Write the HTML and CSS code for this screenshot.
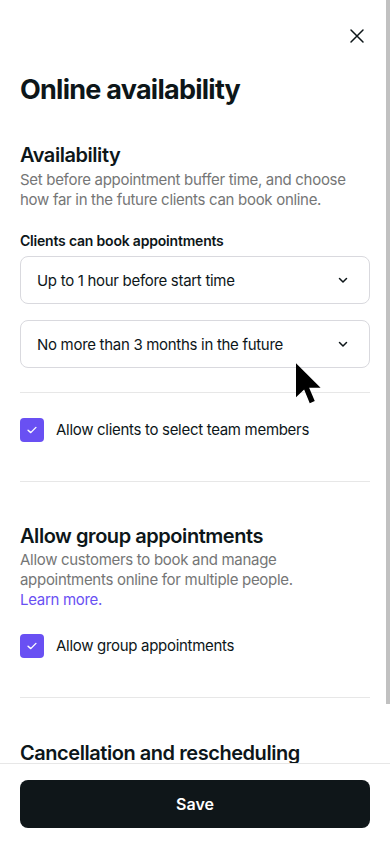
FILE: index.html
```html
<!DOCTYPE html>
<html lang="en">
<head>
<meta charset="utf-8">
<meta name="viewport" content="width=device-width, initial-scale=1">
<title>Online availability</title>
<link rel="stylesheet" href="styles.css">
</head>
<body>
<div class="page">
  <main class="content">
    <div class="topbar">
      <button class="close" aria-label="Close">
        <svg viewBox="0 0 16 16" width="16" height="16"><path d="M2 2 L14 14 M14 2 L2 14" stroke="#0d1619" stroke-width="1.5" stroke-linecap="round" fill="none"/></svg>
      </button>
    </div>
    <h1 class="title">Online availability</h1>

    <section class="section">
      <h2 class="section-title">Availability</h2>
      <p class="desc">Set before appointment buffer time, and choose how far in the future clients can book online.</p>
      <div class="field-label">Clients can book appointments</div>
      <div class="select">
        <span>Up to 1 hour before start time</span>
        <svg class="chev" viewBox="0 0 12 12" width="12" height="12"><path d="M2.5 4.5 L6 8 L9.5 4.5" stroke="#0d1619" stroke-width="1.5" fill="none" stroke-linecap="round" stroke-linejoin="round"/></svg>
      </div>
      <div class="select second">
        <span>No more than 3 months in the future</span>
        <svg class="chev" viewBox="0 0 12 12" width="12" height="12"><path d="M2.5 4.5 L6 8 L9.5 4.5" stroke="#0d1619" stroke-width="1.5" fill="none" stroke-linecap="round" stroke-linejoin="round"/></svg>
      </div>
      <hr class="divider first-div">
      <label class="check-row">
        <span class="checkbox"><svg viewBox="0 0 16 16" width="14" height="14"><path d="M3.5 8.2 L6.6 11 L12.5 5" stroke="#fff" stroke-width="1.6" fill="none" stroke-linecap="round" stroke-linejoin="round"/></svg></span>
        <span class="check-label">Allow clients to select team members</span>
      </label>
    </section>

    <hr class="divider">

    <section class="section group">
      <h2 class="section-title">Allow group appointments</h2>
      <p class="desc">Allow customers to book and manage appointments online for multiple people.</p>
      <a class="link" href="#">Learn more.</a>
      <label class="check-row">
        <span class="checkbox"><svg viewBox="0 0 16 16" width="14" height="14"><path d="M3.5 8.2 L6.6 11 L12.5 5" stroke="#fff" stroke-width="1.6" fill="none" stroke-linecap="round" stroke-linejoin="round"/></svg></span>
        <span class="check-label">Allow group appointments</span>
      </label>
    </section>

    <hr class="divider">

    <section class="section cancel">
      <h2 class="section-title">Cancellation and rescheduling</h2>
    </section>
  </main>
  <footer class="footer">
    <button class="save">Save</button>
  </footer>
  <div class="scroll-thumb"></div>
  <svg class="cursor" viewBox="0 0 12 20" width="25" height="42"><path d="M0 0 V16.4 L3.9 12.6 L6.6 19.2 L9 18.2 L6.3 11.8 H11.8 Z" fill="#000"/></svg>
</div>
</body>
</html>
```

FILE: styles.css
```css
* { box-sizing: border-box; }
html, body { margin: 0; padding: 0; }
body {
  font-family: Inter, "Noto Sans", "Liberation Sans", sans-serif;
  color: #0d1619;
  background: #fff;
  overflow: hidden;
}
.page {
  position: relative;
  width: 390px;
  height: 844px;
  display: flex;
  flex-direction: column;
  overflow: hidden;
}
.content {
  flex: 1;
  overflow: hidden;
  padding: 0 20px;
}
.topbar {
  display: flex;
  justify-content: flex-end;
  padding-top: 28px;
  height: 56px;
}
.close {
  border: 0;
  background: none;
  padding: 0;
  margin-right: 5px;
  width: 16px;
  height: 16px;
  display: flex;
}
.title {
  margin: 16px 0 0;
  font-size: 27px;
  line-height: 36px;
  font-weight: 700;
  letter-spacing: -0.75px;
}
.section-title {
  margin: 0;
  font-size: 20px;
  line-height: 28px;
  font-weight: 600;
  letter-spacing: -0.45px;
}
.section:first-of-type .section-title { margin-top: 33px; }
.desc {
  margin: 1px 0 0;
  font-size: 15px;
  line-height: 20px;
  color: #757676;
  letter-spacing: -0.3px;
}
.link {
  display: block;
  color: #6950f3;
  text-decoration: none;
  font-size: 15px;
  line-height: 20px;
  letter-spacing: -0.3px;
}
.field-label {
  margin-top: 21px;
  font-size: 14px;
  line-height: 20px;
  font-weight: 600;
  letter-spacing: -0.2px;
}
.select {
  margin-top: 5px;
  height: 48px;
  border: 1px solid #d9d9de;
  border-radius: 8px;
  display: flex;
  align-items: center;
  justify-content: space-between;
  padding: 0 20px 0 16px;
  font-size: 15px;
  letter-spacing: -0.3px;
}
.select.second { margin-top: 16px; }
.divider {
  border: 0;
  border-top: 1px solid #e7e7e7;
  margin: 0;
}
.first-div { margin-top: 24px; }
.check-row {
  display: flex;
  align-items: center;
  gap: 12px;
  margin-top: 25px;
  margin-bottom: 39px;
}
.checkbox {
  width: 24px;
  height: 24px;
  border-radius: 4px;
  background: #6950f3;
  display: flex;
  align-items: center;
  justify-content: center;
  flex: none;
}
.check-label { font-size: 15px; line-height: 20px; letter-spacing: -0.3px; }
.group { padding-top: 40px; }
.group .check-row { margin-top: 24px; margin-bottom: 39px; }
.group .desc { margin-top: 0; }
.cancel { padding-top: 41px; }
.footer {
  border-top: 1px solid #e7e7e7;
  padding: 16px 20px 16px;
  background: #fff;
}
.save {
  width: 100%;
  height: 48px;
  border: 0;
  border-radius: 8px;
  background: #0f1619;
  color: #fff;
  font-family: inherit;
  font-size: 16px;
  font-weight: 600;
}
.scroll-thumb {
  position: absolute;
  top: 0;
  right: 0;
  width: 4px;
  height: 704px;
  background: #c1c1c1;
}
.cursor {
  position: absolute;
  left: 296px;
  top: 363px;
}
```
